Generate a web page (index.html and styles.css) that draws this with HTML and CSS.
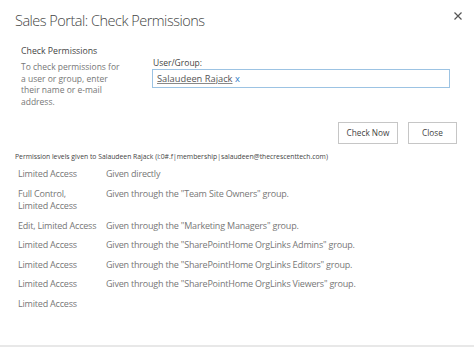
FILE: index.html
```html
<!DOCTYPE html>
<html>
<head>
<meta charset="utf-8">
<link rel="stylesheet" href="styles.css">
</head>
<body>
<div class="dialog">
  <div class="header">
    <div class="title">Sales Portal: Check Permissions</div>
    <div class="close-x">
      <svg width="8" height="8" viewBox="0 0 8 8"><path d="M0.5 0.5L7.5 7.5M7.5 0.5L0.5 7.5" stroke="#555" stroke-width="1.2" fill="none"/></svg>
    </div>
  </div>
  <div class="section">
    <div class="section-desc">
      <div class="section-title">Check Permissions</div>
      <div class="section-text">To check permissions for a user or group, enter their name or e-mail address.</div>
    </div>
    <div class="section-field">
      <div class="field-label">User/Group:</div>
      <div class="picker"><span class="entity">Salaudeen Rajack</span> <span class="remove">x</span></div>
    </div>
  </div>
  <div class="buttons">
    <button class="btn">Check Now</button>
    <button class="btn btn-close">Close</button>
  </div>
  <div class="results-caption">Permission levels given to Salaudeen Rajack (i:0#.f|membership|salaudeen@thecrescenttech.com)</div>
  <div class="results">
    <div class="row"><div class="level">Limited Access</div><div class="how">Given directly</div></div>
    <div class="row"><div class="level">Full Control,<br>Limited Access</div><div class="how">Given through the "Team Site Owners" group.</div></div>
    <div class="row"><div class="level">Edit, Limited Access</div><div class="how">Given through the "Marketing Managers" group.</div></div>
    <div class="row"><div class="level">Limited Access</div><div class="how">Given through the "SharePointHome OrgLinks Admins" group.</div></div>
    <div class="row"><div class="level">Limited Access</div><div class="how">Given through the "SharePointHome OrgLinks Editors" group.</div></div>
    <div class="row"><div class="level">Limited Access</div><div class="how">Given through the "SharePointHome OrgLinks Viewers" group.</div></div>
    <div class="row"><div class="level">Limited Access</div><div class="how"></div></div>
  </div>
</div>
<div class="footer-line"></div>
</body>
</html>
```
FILE: styles.css
```css
html, body {
  margin: 0;
  padding: 0;
  background: #fff;
  width: 474px;
  height: 347px;
  overflow: hidden;
}
body {
  font-family: "Open Sans", "Noto Sans", sans-serif;
  color: #444;
  position: relative;
}
.dialog {
  height: 345px;
}
.header {
  display: flex;
  justify-content: space-between;
  align-items: flex-start;
  padding: 10px 12px 0 15px;
}
.title {
  font-size: 14.5px;
  font-weight: 300;
  color: #444;
  line-height: 22px;
  letter-spacing: -0.5px;
}
.close-x {
  margin-top: 2px;
}
.close-x svg {
  display: block;
}
.section {
  display: flex;
  padding: 12px 0 0 21px;
}
.section-desc {
  width: 131px;
}
.section-title {
  font-size: 8.75px;
  color: #444;
  line-height: 14px;
}
.section-text {
  font-size: 8.5px;
  color: #777;
  line-height: 11.7px;
  margin-top: 3px;
  width: 101px;
}
.section-field {
  padding-top: 13px;
  width: 298px;
}
.field-label {
  font-size: 8.5px;
  color: #444;
  line-height: 12px;
  padding-left: 1px;
}
.picker {
  height: 17px;
  border: 1px solid #9cc3e3;
  font-size: 9.3px;
  line-height: 17px;
  padding-left: 4px;
  color: #555;
}
.entity {
  text-decoration: underline;
  text-decoration-color: #888;
}
.remove {
  color: #2a7ac6;
}
.buttons {
  display: flex;
  justify-content: flex-end;
  gap: 10px;
  padding: 14px 17px 0 0;
}
.btn {
  font-family: "Open Sans", "Noto Sans", sans-serif;
  font-size: 8.25px;
  color: #444;
  background: #fff;
  border: 1px solid #c6c6c6;
  height: 22px;
  width: 60px;
  padding: 0;
}
.btn-close {
  width: 49px;
}
.results-caption {
  font-size: 6.8px;
  color: #444;
  padding: 8px 0 0 15px;
  line-height: 10px;
}
.results {
  padding: 6.5px 0 0 18px;
  display: flex;
  flex-direction: column;
  gap: 7px;
}
.row {
  display: flex;
  font-size: 9px;
  letter-spacing: -0.2px;
  color: #777;
  line-height: 12.5px;
}
.level {
  width: 88px;
}
.footer-line {
  position: absolute;
  left: 0;
  right: 0;
  bottom: 0;
  height: 2px;
  background: #e8e8e8;
}
```
